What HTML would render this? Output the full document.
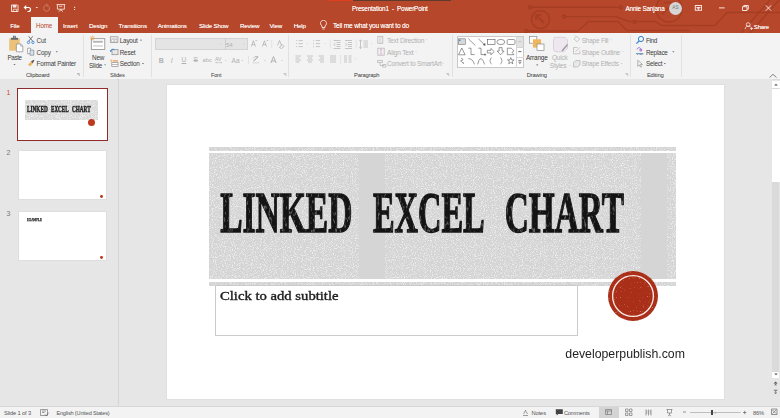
<!DOCTYPE html>
<html><head><meta charset="utf-8">
<style>
*{margin:0;padding:0;box-sizing:border-box}
html,body{width:780px;height:418px;overflow:hidden;background:#e6e6e6;font-family:"Liberation Sans",sans-serif}
.a{position:absolute;white-space:pre;line-height:1}
#title{position:absolute;left:0;top:0;width:780px;height:33px;background:#b7472a;overflow:hidden}
.w{color:#fff}
.t{font-size:6.26px;letter-spacing:-0.19px;color:#fff;text-shadow:0 0 0.4px rgba(255,255,255,0.7)}
#ribbon{position:absolute;left:0;top:33px;width:780px;height:47px;background:#f3f3f3;border-bottom:1px solid #dadada}
.r{font-size:6.37px;letter-spacing:-0.19px;color:#404040}
.d{font-size:6.37px;letter-spacing:-0.19px;color:#b1b1b1}
.gl{font-size:5.83px;letter-spacing:-0.17px;color:#444;-webkit-text-stroke:0.03px #444}
.sep{position:absolute;top:3px;width:1px;height:42px;background:#e1e1e1}
#pane{position:absolute;left:0;top:79px;width:117px;height:327px;background:#e6e6e6}
#div{position:absolute;left:118px;top:79px;width:1px;height:327px;background:#d5d5d5}
#main{position:absolute;left:119px;top:79px;width:653px;height:327px;background:#e6e6e6}
#slide{position:absolute;left:167px;top:85px;width:557px;height:314px;background:#fff;overflow:hidden;box-shadow:0 0 1px rgba(0,0,0,0.18)}
#status{position:absolute;left:0;top:406px;width:780px;height:12px;background:#f3f3f3;border-top:1px solid #d8d8d8}
.s{font-size:5.62px;letter-spacing:-0.16px;color:#555}
.tth{top:104.9px;font-family:"Liberation Serif",serif;font-weight:bold;font-size:8.75px;color:#222;-webkit-text-stroke:0.45px #222;transform-origin:0 0}
.st{font-family:"Liberation Serif",serif;font-weight:bold;font-size:57.5px}
.ttl{top:183px;font-family:"Liberation Serif",serif;font-weight:bold;font-size:55.5px;color:#222;-webkit-text-stroke:2.6px #222;transform-origin:0 0}
</style></head><body>

<div id="title">
  <svg width="780" height="33" style="position:absolute;left:0;top:0" fill="none" stroke="#a53e23" stroke-width="1.35">
    <path d="M530 7.2H621"/><circle cx="530" cy="7.2" r="1.6"/><circle cx="621" cy="7.2" r="1.6"/>
    <circle cx="540.5" cy="19.5" r="9" stroke-width="1.5"/><path d="M536 15l8 8M536 15v5M536 15h5" stroke-width="1.8"/>
    <path d="M564 16.6H616L629 21.5H655L662 25.5H715L727 12.5H780"/><circle cx="564" cy="16.6" r="1.6"/><circle cx="634.6" cy="22" r="1.6"/>
    <path d="M526 31H578L588.5 21.5H618L627 30.5H690"/><circle cx="526" cy="31" r="1.6"/>
    <circle cx="669" cy="9" r="13" stroke-width="1.5"/><path d="M664 2.5H674V12M674 2.5L662 14.5" stroke-width="1.6"/>
        <path d="M741 33L770 0M750 33L780 -1"/>
  </svg>
  <div style="position:absolute;left:329px;top:0;width:24px;height:1px;background:#e0401f"></div>
  <div style="position:absolute;left:353px;top:0;width:98px;height:1px;background:#5e3b2c"></div>
  <svg width="80" height="16" style="position:absolute;left:0;top:0" fill="none" stroke="#fff" stroke-width="1">
    <path d="M11.5 5h6l0.5 0.5v6h-6.5z" stroke="#f6e3dd"/>
    <rect x="12.8" y="5" width="3.6" height="2.6" fill="#f6e3dd" stroke="none"/>
    <path d="M13.3 11.5v-2.3h3.3v2.3" stroke="#f6e3dd" stroke-width="0.8"/>
    <path d="M26.3 5.6l-1.9 1.9 1.9 1.9" stroke-width="1.2"/>
    <path d="M24.6 7.5h3.9a2 2 0 0 1 0 4h-1" stroke-width="1.2"/>
    <path d="M35.6 7.1h2.4l-1.2 1.2z" fill="#fff" stroke="none"/>
    <path d="M48.9 6.3a3 3 0 1 1-2-1.1" stroke="#d08272" stroke-width="0.9"/>
    <path d="M46.3 3.9l1.9 1.5-1.5 1.5" stroke="#d08272" stroke-width="0.9"/>
    <path d="M56.6 4.6h8.6M57.4 4.6v4.6h7V4.6" stroke="#f6e3dd" stroke-width="0.9"/>
    <path d="M59 6.3h3.3M60.8 9.2v1.4M58.6 11.6l2.2-1.6 2.2 1.6" stroke="#f6e3dd" stroke-width="0.8"/>
    <path d="M74.6 6.8v1.1M74.6 8.9v1.1" stroke="#f6e3dd" stroke-width="1.1"/>
  </svg>
  <div class="a t" style="left:352px;top:5.5px;font-size:6.37px;letter-spacing:-0.19px">Presentation1  -  PowerPoint</div>
  <div class="a t" style="left:625.5px;top:6px;font-size:6.39px;letter-spacing:-0.19px;color:#fff">Annie Sanjana</div>
  <div style="position:absolute;left:669px;top:1.8px;width:13px;height:13px;border-radius:50%;background:#d5d5d5"></div>
  <div class="a" style="left:672.3px;top:6px;font-size:4.7px;color:#777">AS</div>
  <svg width="90" height="16" style="position:absolute;left:690px;top:0" fill="none" stroke="#f8e4de" stroke-width="1">
    <rect x="5.3" y="5.5" width="6.2" height="4.8"/><path d="M6.5 7.5h4M8.4 7.6v2.5M7.3 8.6l1.1-1.1 1.1 1.1"/>
    <path d="M29 7.9h5.6"/>
    <path d="M52.5 6.7h4.5v3.8h-4.5zM53.8 6.7v-1.2h4.5v3.7h-1.2"/>
    <path d="M75.8 5.4l5.3 5.3M81.1 5.4l-5.3 5.3"/>
  </svg>
  <svg width="10" height="10" style="position:absolute;left:744px;top:22px" fill="none" stroke="#f8e4de" stroke-width="0.85">
    <circle cx="4.2" cy="2.6" r="1.9"/><path d="M1 7.2a3.4 3.4 0 0 1 5.6-2.4M6.1 6.6h3M7.6 5.1v3"/>
  </svg>
  <div class="a t" style="left:753.8px;top:24px;color:#fff;font-size:6.05px;letter-spacing:-0.18px">Share</div>
  <div style="position:absolute;left:31px;top:17px;width:27px;height:16px;background:#f3f3f3"></div>
  <div class="a t" style="left:10.2px;top:23px">File</div>
  <div class="a" style="left:36px;top:23px;font-size:6.3px;letter-spacing:-0.15px;color:#b7472a">Home</div>
  <div class="a t" style="left:63px;top:23px">Insert</div>
  <div class="a t" style="left:89px;top:23px">Design</div>
  <div class="a t" style="left:118.6px;top:23px">Transitions</div>
  <div class="a t" style="left:157.7px;top:23px">Animations</div>
  <div class="a t" style="left:199px;top:23px">Slide Show</div>
  <div class="a t" style="left:240px;top:23px">Review</div>
  <div class="a t" style="left:269.5px;top:23px">View</div>
  <div class="a t" style="left:293.7px;top:23px">Help</div>
  <svg width="8" height="10" style="position:absolute;left:320px;top:20px" fill="none" stroke="#fbe9e4" stroke-width="0.9">
    <path d="M2 7.5v-1.6a3 3 0 1 1 3 0v1.6zM2.4 9h2.2"/>
  </svg>
  <div class="a t" style="left:333px;top:23px;font-size:6.59px;letter-spacing:-0.19px">Tell me what you want to do</div>
</div>

<div id="ribbon"></div>
<div id="rib" style="position:absolute;left:0;top:0;width:780px;height:80px">
  <!-- separators -->
  <div class="sep" style="left:83px;top:35px"></div>
  <div class="sep" style="left:151px;top:35px"></div>
  <div class="sep" style="left:288px;top:35px"></div>
  <div class="sep" style="left:452px;top:35px"></div>
  <div class="sep" style="left:629.5px;top:35px"></div>
  <div class="sep" style="left:681px;top:35px"></div>
  <!-- Clipboard -->
  <svg width="80" height="48" style="position:absolute;left:0;top:33px" viewBox="0 33 80 48">
    <rect x="9.2" y="38.3" width="10.6" height="12.4" fill="#eac27a"/>
    <rect x="11" y="37.8" width="7" height="1.9" fill="#5d6570"/>
    <rect x="13.5" y="36.2" width="2" height="1.8" fill="none" stroke="#5d6570" stroke-width="0.8"/>
    <path d="M16.4 44h4.3l2.1 2.1v5.7h-6.4z" fill="#fff" stroke="#8a8a8a" stroke-width="0.7"/>
    <path d="M20.7 44v2.1h2.1" fill="none" stroke="#8a8a8a" stroke-width="0.6"/>
    <path d="M13.4 64.0h2.2l-1.1 1.2z" fill="#666"/>
    <path d="M28.6 36.3l4.2 5M32.8 36.3l-4.2 5" stroke="#555" stroke-width="0.8"/>
    <circle cx="28.5" cy="42.4" r="1.2" fill="none" stroke="#3f88d8" stroke-width="0.9"/>
    <circle cx="32.9" cy="42.4" r="1.2" fill="none" stroke="#3f88d8" stroke-width="0.9"/>
    <path d="M27.6 48.2h3v5.5h-3z" fill="#fff" stroke="#888" stroke-width="0.7"/>
    <path d="M30 50.2h3.8v5h-3.8z" fill="#cfe3f7" stroke="#888" stroke-width="0.7"/>
    <path d="M55.7 51.2h2.2l-1.1 1.2z" fill="#666"/>
    <path d="M28 64.6l3-3 2 2-3 3z" fill="#e9b865"/>
    <path d="M31 61.6l2.6-1.8 0.8 0.8-1.8 2.6z" fill="#555"/>
    <path d="M77 73.5h2.3v2.3M77.4 73.9l1.6 1.6" fill="none" stroke="#999" stroke-width="0.6"/>
  </svg>
  <div class="a r" style="left:7.6px;top:55px;font-size:6.3px;letter-spacing:-0.42px">Paste</div>
  <div class="a r" style="left:36.6px;top:38px">Cut</div>
  <div class="a r" style="left:36.6px;top:50px">Copy</div>
  <div class="a r" style="left:36.6px;top:61px">Format Painter</div>
  <div class="a gl" style="left:25.9px;top:73px;font-size:5.85px;letter-spacing:-0.17px">Clipboard</div>

  <!-- Slides -->
  <svg width="80" height="48" style="position:absolute;left:80px;top:33px" viewBox="80 33 80 48">
    <rect x="91.3" y="38.7" width="13.5" height="10.7" fill="#fff" stroke="#8c8c8c" stroke-width="0.8"/>
    <rect x="93" y="40.8" width="9.8" height="1.9" fill="#b5b5b5"/>
    <rect x="93" y="45.3" width="9.8" height="1.3" fill="#cfcfcf"/>
    <circle cx="92.4" cy="38.2" r="1.3" fill="none" stroke="#f0a33a" stroke-width="0.7"/>
    <path d="M92.4 35.6v1M92.4 39.8v1M89.8 38.2h1M94 38.2h1M90.6 36.4l0.6 0.6M93.6 39.4l0.6 0.6M94.2 36.4l-0.6 0.6M91.2 39.4l-0.6 0.6" stroke="#f0a33a" stroke-width="0.6"/>
    <path d="M104.0 64.4h2.2l-1.1 1.2z" fill="#666"/>
    <rect x="110.3" y="36.8" width="7.6" height="5.8" fill="#fff" stroke="#8c8c8c" stroke-width="0.7"/>
    <path d="M111.3 38.3h5.6M111.5 39.5h2.3v2.3h-2.3zM114.6 39.5h2.3v2.3h-2.3z" fill="none" stroke="#9a9a9a" stroke-width="0.5"/>
    <path d="M139.9 39.8h2.2l-1.1 1.2z" fill="#666"/>
    <rect x="112" y="49.5" width="6" height="5.2" fill="#e8e8e8" stroke="#8c8c8c" stroke-width="0.7"/>
    <path d="M110.6 51.5a2.4 2.4 0 0 1 4-1.6" fill="none" stroke="#2f7fd0" stroke-width="1"/>
    <path d="M109.7 50.5l1 1.5 1.3-1.2z" fill="#2f7fd0"/>
    <rect x="110.3" y="59.6" width="2" height="2" fill="#f6b873"/>
    <rect x="113" y="60.2" width="5" height="1.4" fill="#f0a064"/>
    <rect x="111.8" y="62.6" width="6.2" height="3.8" fill="#fff" stroke="#8c8c8c" stroke-width="0.7"/>
    <path d="M111.8 64.5h6.2" stroke="#8c8c8c" stroke-width="0.6"/>
    <path d="M141.9 63.0h2.2l-1.1 1.2z" fill="#666"/>
  </svg>
  <div class="a r" style="left:92px;top:55px">New</div>
  <div class="a r" style="left:89px;top:63px">Slide</div>
  <div class="a r" style="left:119.7px;top:38px">Layout</div>
  <div class="a r" style="left:119.7px;top:50px">Reset</div>
  <div class="a r" style="left:119.7px;top:61px">Section</div>
  <div class="a gl" style="left:110px;top:73px;font-size:5.72px;letter-spacing:-0.16px">Slides</div>
  <!-- Font -->
  <div style="position:absolute;left:155.4px;top:38.2px;width:92.2px;height:11.4px;background:#e4e4e4;border:1px solid #d3d3d3"></div>
  <div style="position:absolute;left:224.5px;top:38.2px;width:1px;height:11.4px;background:#cdcdcd"></div>
  <div class="a d" style="left:226px;top:42px;font-size:6.05px;letter-spacing:-0.18px">54</div>
  <svg width="135" height="48" style="position:absolute;left:152px;top:33px" viewBox="152 33 135 48" fill="#b4b4b4">
    <path d="M219.9 43.6h1.5l-0.75 0.8zM242.9 43.6h1.5l-0.75 0.8z" fill="#c6c6c6"/>
    <path d="M225 60.1h1.5l-0.75 0.8zM241.6 60.1h1.5l-0.75 0.8zM264.1 60.1h1.5l-0.75 0.8zM281.3 60.1h1.5l-0.75 0.8z"/>
    <path d="M251.3 46.6l2.1-5.8 2.1 5.8M252.1 44.6h2.7M255.6 40.8l0.7-0.8 0.7 0.8" fill="none" stroke="#a9a9a9" stroke-width="0.7"/>
    <path d="M262.3 46.6l2.1-5.8 2.1 5.8M263.1 44.6h2.7M266.6 40.1l0.7 0.8 0.7-0.8" fill="none" stroke="#a9a9a9" stroke-width="0.7"/>
    <rect x="271.4" y="40" width="0.8" height="8.5" fill="#dedede"/>
    <path d="M277.5 45.5l2-5 2 5M279.5 47.5l2.5-3 2 2-2.5 2z" fill="none" stroke="#a9a9a9" stroke-width="0.7"/>
    <rect x="248.2" y="56" width="0.8" height="8.5" fill="#dedede"/>
    <path d="M253 58.5l2 -2h3l-4 4" fill="none" stroke="#a9a9a9" stroke-width="0.7"/>
    <path d="M253.5 61.5l4.5-4.5" stroke="#a9a9a9" stroke-width="0.9"/>
    <rect x="252.8" y="62.4" width="6.5" height="0.9" fill="#e3cce3"/>
    <path d="M270.9 63l2.6-6.5 2.6 6.5M271.9 61h3.2" fill="none" stroke="#a9a9a9" stroke-width="0.9"/>
    <path d="M215.8 62.6h6M216.5 62l-0.8 0.6 0.8 0.6M221 62l0.8 0.6-0.8 0.6" fill="none" stroke="#b0b0b0" stroke-width="0.5"/>
    <path d="M283.6 73.5h2.3v2.3M284 73.9l1.6 1.6" fill="none" stroke="#aaa" stroke-width="0.6"/>
  </svg>
  <div class="a" style="left:158.7px;top:57px;font-size:7px;font-weight:bold;color:#b0b0b0">B</div>
  <div class="a" style="left:170.8px;top:57px;font-size:7px;font-style:italic;color:#b0b0b0">I</div>
  <div class="a" style="left:181.5px;top:57px;font-size:6.6px;color:#b0b0b0;text-decoration:underline">U</div>
  <div class="a" style="left:193.5px;top:57px;font-size:6.6px;color:#b0b0b0;text-decoration:line-through">S</div>
  <div class="a" style="left:202.5px;top:58px;font-size:5.8px;color:#b0b0b0">abc</div>
  <div class="a" style="left:215px;top:56.5px;font-size:5.2px;color:#b0b0b0">AV</div>
  <div class="a" style="left:231.5px;top:57.5px;font-size:6.6px;color:#b0b0b0">Aa</div>
  <div class="a gl" style="left:211px;top:73px;font-size:5.51px;letter-spacing:-0.16px">Font</div>

  <!-- Paragraph -->
  <svg width="170" height="48" style="position:absolute;left:285px;top:33px" viewBox="285 33 170 48" fill="none" stroke="#b9b9b9" stroke-width="0.8">
    <path d="M296 40.6h1M296 43.6h1M296 46.6h1M298.5 40.6h4.3M298.5 43.6h4.3M298.5 46.6h4.3"/>
    <path d="M313.5 40.3v1M313.5 43.3v1M313.5 46.3v1M315.8 40.6h4.3M315.8 43.6h4.3M315.8 46.6h4.3"/>
    <path d="M306.7 43.4h1.5l-0.75 0.8zM324.2 43.4h1.5l-0.75 0.8zM370.8 43.4h1.5l-0.75 0.8zM354.7 58.8h1.5l-0.75 0.8z" fill="#b9b9b9" stroke="none"/>
    <path d="M330.3 39.5v9M356.2 39.5v9M340.6 55v9" stroke="#dedede"/>
    <path d="M333.5 40.5h7M336.5 42.5h4M336.5 44.5h4M336.5 46.5h4M333.5 48.5h7M335.5 42.8l-1.6 1.7 1.6 1.7"/>
    <path d="M345 40.5h7M348 42.5h4M348 44.5h4M348 46.5h4M345 48.5h7M345.2 42.8l1.6 1.7-1.6 1.7"/>
    <path d="M360.5 40v8.5M359 41.3l1.5-1.5 1.5 1.5M359 47.2l1.5 1.5 1.5-1.5M363.5 41h4.5M363.5 43h4.5M363.5 45h4.5M363.5 47h4.5"/>
    <path d="M295.5 56h5.5M295.5 58h4M295.5 60h5.5M295.5 62h4"/>
    <path d="M307 56h6M308 58h4M307 60h6M308 62h4"/>
    <path d="M318.5 56h5.5M320 58h4M318.5 60h5.5M320 62h4"/>
    <path d="M330 56h6M330 58h6M330 60h6M330 62h6"/>
    <path d="M344 56h3M344 58h3M344 60h3M344 62h3M348.5 56h3M348.5 58h3M348.5 60h3M348.5 62h3"/>
    <rect x="377.8" y="36.3" width="5" height="7"/>
    <path d="M379.3 38h2M379.3 40h2M379.3 42h2"/>
    <rect x="377.8" y="48.2" width="6.4" height="7"/>
    <path d="M381 49v5.5M380 50.2l1-1 1 1M380 53.5l1 1 1-1" stroke="#d9a5cf"/>
    <path d="M377.5 60.5h5v2h-5zM380 62.5v3h4.5M382.5 64.5h3.5v2.5h-3.5z"/>
    <path d="M425.9 39.5h1.5l-0.75 0.8zM415.3 51.4h1.5l-0.75 0.8zM442.5 63h1.5l-0.75 0.8z" fill="#b9b9b9" stroke="none"/>
    <path d="M446.5 73.5h2.3v2.3M446.9 73.9l1.6 1.6" stroke="#aaa" stroke-width="0.6"/>
  </svg>
  <div class="a d" style="left:387px;top:38px;font-size:6.59px;letter-spacing:-0.19px">Text Direction</div>
  <div class="a d" style="left:387px;top:50px;font-size:6.59px;letter-spacing:-0.19px">Align Text</div>
  <div class="a d" style="left:387px;top:61px;font-size:6.59px;letter-spacing:-0.19px">Convert to SmartArt</div>
  <div class="a gl" style="left:354px;top:73px;font-size:5.78px;letter-spacing:-0.17px">Paragraph</div>
  <!-- Drawing -->
  <div style="position:absolute;left:456.5px;top:36px;width:67px;height:31.5px;background:#fff;border:1px solid #c8c8c8"></div>
  <div style="position:absolute;left:516.2px;top:36px;width:7.3px;height:31.5px;border-left:1px solid #d4d4d4"></div>
  <div style="position:absolute;left:517px;top:37px;width:5.5px;height:9.5px;background:#e2e2e2"></div>
  <div style="position:absolute;left:516.5px;top:46.5px;width:7px;height:1px;background:#d4d4d4"></div>
  <div style="position:absolute;left:516.5px;top:56.5px;width:7px;height:1px;background:#d4d4d4"></div>
  <svg width="180" height="48" style="position:absolute;left:452px;top:33px" viewBox="452 33 180 48" fill="none" stroke="#555" stroke-width="0.6">
    <rect x="458.3" y="38.8" width="7" height="5.6" fill="#d8d8d8" stroke="#777"/>
    <rect x="459" y="39.5" width="1.5" height="1.5" fill="#4a8ad6" stroke="none"/>
    <path d="M468.3 38.7l7 6.8M478.3 38.7l6.4 6.2"/>
    <path d="M485.2 45.3l-1.9-0.4 1.5-1.5z" fill="#555"/>
    <rect x="487.4" y="39.5" width="7.6" height="5"/>
    <ellipse cx="500.8" cy="42" rx="3.9" ry="2.6"/>
    <rect x="507.2" y="39.5" width="7.8" height="5" rx="1.2"/>
    <path d="M458.5 54.8l3.3-6.8 3.3 6.8z"/>
    <path d="M468.3 48.2h2.7v6.4h3.7"/>
    <path d="M478.3 48.2h2.7v6.4h3"/>
    <circle cx="485" cy="54.6" r="0.7" fill="#555"/>
    <path d="M487.3 50.3h3.6v-1.9l3.3 3.2-3.3 3.2v-1.9h-3.6z"/>
    <path d="M499.1 47.6h3v3.5h2l-3.5 3.7-3.5-3.7h2z"/>
    <path d="M507.3 48.2h4l2.7 2.7-2 1.5 2 2.3h-6.7z"/>
    <path d="M461 58l2.2 1.6-2.6 1.4 3 2.3M463.5 62.5l-0.3 1.3"/>
    <path d="M468.2 58.6c3 0 5.5 2 6.2 5.8"/>
    <path d="M477.7 64.4c1.6-7.6 4.6-7.6 6.8 0"/>
    <path d="M491.5 57.5c-1 0-0.8 3-1.8 3.3 1 0.3 0.8 3.3 1.8 3.3"/>
    <path d="M500.5 57.5c1 0 0.8 3 1.8 3.3-1 0.3-0.8 3.3-1.8 3.3"/>
    <path d="M510.8 57.6l0.9 2.3h2.4l-1.9 1.5 0.7 2.4-2.1-1.4-2.1 1.4 0.7-2.4-1.9-1.5h2.4z"/>
    <path d="M518.4 41.6h3" stroke="#aaa"/>
    <path d="M518.4 51.6h3" stroke="#555" stroke-width="0.9"/>
    <path d="M518.4 60.6h3M518.4 62.2h3M519.1 63l0.8 0.7 0.8-0.7" stroke="#555" stroke-width="0.7"/>
    <rect x="529.6" y="36.6" width="7.2" height="6.6" fill="#fff" stroke="#8c8c8c" stroke-width="0.7"/>
    <rect x="533" y="39.3" width="8" height="8.3" fill="#f0b65c" stroke="none"/>
    <rect x="537" y="44" width="7" height="6.6" fill="#fff" stroke="#8c8c8c" stroke-width="0.7"/>
    <path d="M536.1 64.6h2.2l-1.1 1.2z" fill="#555" stroke="none"/>
    <path d="M554.5 37.3h10.5l2.5 2.5v8.5l-3.5 3.5h-7.5a3 3 0 0 1-3-3v-8.5z" fill="#eee7f0" stroke="#c9c1cc" stroke-width="0.6"/>
    <path d="M567.5 44.5l-5.5 6.5" stroke="#9a9a9a" stroke-width="1.3"/>
    <path d="M569.5 65.3h1.5l-0.75 0.8zM610.3 39.6h1.5l-0.75 0.8zM622 51.2h1.5l-0.75 0.8zM620.8 63.1h1.5l-0.75 0.8z" fill="#b9b9b9" stroke="none"/>
    <path d="M574 38.8l2.6-2.6 3 3-2.6 2.6zM575.7 36.2l-0.8-0.8" stroke="#b2b2b2" stroke-width="0.7"/>
    <path d="M573.5 47.5h4M573.5 47.5v6.3h6.3v-3M575.5 51.8l4.5-4.5" stroke="#b2b2b2" stroke-width="0.7"/>
    <path d="M573.5 62.5l2.5-2h4v4.5l-2.5 2h-4z" fill="#e8e8e8" stroke="#b2b2b2" stroke-width="0.7"/>
    <path d="M625.5 73.5h2.3v2.3M625.9 73.9l1.6 1.6" stroke="#aaa" stroke-width="0.6"/>
  </svg>
  <div class="a r" style="left:526px;top:55px;font-size:6.48px;letter-spacing:-0.19px;color:#333">Arrange</div>
  <div class="a d" style="left:551.9px;top:55px;font-size:6.48px;letter-spacing:-0.19px">Quick</div>
  <div class="a d" style="left:549.8px;top:63px;font-size:6.48px;letter-spacing:-0.19px">Styles</div>
  <div class="a d" style="left:581.7px;top:38px;font-size:6.43px;letter-spacing:-0.19px">Shape Fill</div>
  <div class="a d" style="left:581.7px;top:50px;font-size:6.43px;letter-spacing:-0.19px">Shape Outline</div>
  <div class="a d" style="left:581.7px;top:61px;font-size:6.37px;letter-spacing:-0.19px">Shape Effects</div>
  <div class="a gl" style="left:526.8px;top:73px;font-size:5.75px;letter-spacing:-0.16px">Drawing</div>
  <!-- Editing -->
  <svg width="60" height="48" style="position:absolute;left:630px;top:33px" viewBox="630 33 60 48" fill="none">
    <circle cx="641" cy="39" r="2.6" stroke="#2f7fd0" stroke-width="1"/>
    <path d="M639.2 40.9l-2.8 2.8" stroke="#2f7fd0" stroke-width="1.2"/>
    <path d="M637 49.5a2 2 0 1 1 3.5 1.5" stroke="#9a7fd0" stroke-width="1"/>
    <circle cx="640.8" cy="50" r="1.5" fill="#b07fd8"/>
    <path d="M636 53.6h7.4" stroke="#3c7fc8" stroke-width="0.8"/>
    <path d="M637 54.3h1.2M639.5 54.3h3" stroke="#888" stroke-width="0.9"/>
    <path d="M672.3 51.2h2.2l-1.1 1.2zM663.7 63.0h2.2l-1.1 1.2z" fill="#666"/>
    <path d="M637.8 60.2v6.2l1.6-1.5 1.2 2.3 1-0.5-1.2-2.2h2.2z" stroke="#888" stroke-width="0.6"/>
  </svg>
  <div class="a r" style="left:645.9px;top:38px;font-size:6.37px;letter-spacing:-0.3px">Find</div>
  <div class="a r" style="left:645.9px;top:50px;font-size:6.37px;letter-spacing:-0.22px">Replace</div>
  <div class="a r" style="left:645.9px;top:61px;font-size:6.37px;letter-spacing:-0.22px">Select</div>
  <div class="a gl" style="left:646.9px;top:73px;font-size:5.83px;letter-spacing:-0.17px">Editing</div>
  <svg width="10" height="6" style="position:absolute;left:768px;top:73px" fill="none" stroke="#555" stroke-width="0.7"><path d="M1.5 4.5l3.5-3.2 3.5 3.2"/></svg>
</div>
<div id="pane"></div>
<div id="div"></div>
<div id="main"></div>
<svg width="0" height="0" style="position:absolute">
  <defs>
    <filter id="speck" x="0" y="0" width="100%" height="100%">
      <feTurbulence type="fractalNoise" baseFrequency="0.9" numOctaves="2" seed="3" result="n"/>
      <feColorMatrix in="n" type="matrix" values="0 0 0 0 1  0 0 0 0 1  0 0 0 0 1  0 0 -4 0 2.05"/>
    </filter>
    <filter id="speck2" x="0" y="0" width="100%" height="100%">
      <feTurbulence type="fractalNoise" baseFrequency="1.1" numOctaves="2" seed="7" result="n"/>
      <feColorMatrix in="n" type="matrix" values="0 0 0 0 1  0 0 0 0 1  0 0 0 0 1  0 0 -5 0 2.6"/>
    </filter>
    <filter id="speck3" x="0" y="0" width="100%" height="100%">
      <feTurbulence type="fractalNoise" baseFrequency="0.8" numOctaves="2" seed="11" result="n"/>
      <feColorMatrix in="n" type="matrix" values="0 0 0 0 1  0 0 0 0 0.85  0 0 0 0 0.8  0 0 -6 0 2.0"/>
    </filter>
  </defs>
</svg>
<!-- thumbnails -->
<div class="a" style="left:6.4px;top:88.5px;font-size:7px;color:#cc4a2a">1</div>
<div style="position:absolute;left:16.8px;top:87.6px;width:91px;height:53.4px;border:1.6px solid #8f2b2b;background:#fff"></div>
<div style="position:absolute;left:25px;top:99.5px;width:73px;height:20.8px;background:#d9d9d9"></div>
<svg width="73" height="21" style="position:absolute;left:25px;top:99.5px"><rect width="73" height="21" filter="url(#speck2)" opacity="0.6"/></svg>
<div class="a tth" style="left:26.7px;transform:scaleX(0.6018)">LINKED</div>
<div class="a tth" style="left:50.8px;transform:scaleX(0.5821)">EXCEL</div>
<div class="a tth" style="left:71.6px;transform:scaleX(0.5944)">CHART</div>
<div style="position:absolute;left:87.9px;top:119px;width:7.4px;height:7.4px;border-radius:50%;background:#bf3a1d"></div>
<div class="a" style="left:6.4px;top:148.5px;font-size:7px;color:#777">2</div>
<div style="position:absolute;left:18px;top:150px;width:89px;height:50px;background:#fff;border:1px solid #dedede"></div>
<div style="position:absolute;left:100.3px;top:195.2px;width:2.8px;height:2.8px;border-radius:50%;background:#c0391c"></div>
<div class="a" style="left:6.4px;top:209.5px;font-size:7px;color:#777">3</div>
<div style="position:absolute;left:18px;top:210.5px;width:89px;height:50px;background:#fff;border:1px solid #dedede"></div>
<div class="a" style="left:26.8px;top:217.4px;font-family:'Liberation Serif',serif;font-weight:bold;font-size:5px;color:#222;-webkit-text-stroke:0.25px #222;transform-origin:0 0;transform:scaleX(0.6)">EXAMPLE</div>
<div style="position:absolute;left:100.3px;top:255.9px;width:2.8px;height:2.8px;border-radius:50%;background:#c0391c"></div>

<!-- slide -->
<div id="slide"></div>
<div style="position:absolute;left:209px;top:147px;width:467px;height:4px;background:#d2d2d2"></div>
<svg width="467" height="4" style="position:absolute;left:209px;top:147px"><rect width="467" height="4" filter="url(#speck2)" opacity="0.5"/></svg>
<div style="position:absolute;left:209px;top:153px;width:467px;height:125.5px;background:#d4d4d4"></div>
<svg width="467" height="126" style="position:absolute;left:209px;top:153px"><rect width="467" height="126" filter="url(#speck)" opacity="0.6"/></svg>
<div style="position:absolute;left:359px;top:153px;width:26px;height:125.5px;background:#d5d5d5"></div>
<div style="position:absolute;left:640.5px;top:153px;width:26px;height:125.5px;background:#d5d5d5"></div>
<div style="position:absolute;left:209px;top:282px;width:467px;height:3.6px;background:#d2d2d2"></div>
<svg width="467" height="4" style="position:absolute;left:209px;top:282px"><rect width="467" height="4" filter="url(#speck2)" opacity="0.5"/></svg>

<svg width="780" height="418" style="position:absolute;left:0;top:0;will-change:transform">
  <defs>
    <clipPath id="tclip">
      <text x="0" y="231.85" transform="translate(220.2 0) scale(0.5831 1)" class="st">LINKED</text>
      <text x="0" y="231.85" transform="translate(372.9 0) scale(0.5643 1)" class="st">EXCEL</text>
      <text x="0" y="231.85" transform="translate(504.8 0) scale(0.5798 1)" class="st">CHART</text>
    </clipPath>
    <filter id="speckT" x="0" y="0" width="100%" height="100%">
      <feTurbulence type="fractalNoise" baseFrequency="0.45 0.18" numOctaves="3" seed="5" result="n"/>
      <feColorMatrix in="n" type="matrix" values="0 0 0 0 0.6  0 0 0 0 0.6  0 0 0 0 0.6  0 0 -4 0 1.75"/>
    </filter>
  </defs>
  <g fill="#141414" stroke="#141414" stroke-width="1.4">
    <text x="0" y="231.85" transform="translate(220.2 0) scale(0.5831 1)" class="st">LINKED</text>
    <text x="0" y="231.85" transform="translate(372.9 0) scale(0.5643 1)" class="st">EXCEL</text>
    <text x="0" y="231.85" transform="translate(504.8 0) scale(0.5798 1)" class="st">CHART</text>
  </g>
  <g clip-path="url(#tclip)"><rect x="215" y="185" width="415" height="52" filter="url(#speckT)" opacity="0.45"/></g>
</svg>

<div style="position:absolute;left:215.4px;top:285px;width:362.6px;height:50.6px;border:1px solid #cbcbcb"></div>
<div class="a" id="sub" style="left:219.6px;top:291px;font-family:'Liberation Serif',serif;font-size:11.8px;color:#1e1e1e;-webkit-text-stroke:0.35px #1e1e1e;transform-origin:0 0;transform:scaleX(1.243)">Click to add subtitle</div>

<svg width="52" height="52" style="position:absolute;left:607px;top:269.8px">
  <defs><clipPath id="cc"><circle cx="26" cy="26" r="25"/></clipPath></defs>
  <circle cx="26" cy="26" r="25" fill="#aa2f19"/>
  <g clip-path="url(#cc)"><rect width="52" height="52" filter="url(#speck3)" opacity="0.35"/></g>
  <circle cx="26" cy="26" r="20.4" fill="none" stroke="#fbeee9" stroke-width="1.3"/>
</svg>

<div class="a" id="dev" style="left:565.3px;top:348px;font-size:12.3px;color:#1e1e1e">developerpublish.com</div>

<!-- scrollbar -->
<div style="position:absolute;left:771.7px;top:81px;width:7.3px;height:291px;background:#dadada"></div>
<div style="position:absolute;left:772px;top:81px;width:8px;height:7px;background:#fff"></div>
<div style="position:absolute;left:772.4px;top:89px;width:7.2px;height:93px;background:#fff"></div>
<div style="position:absolute;left:771.7px;top:371.7px;width:7.2px;height:6.3px;background:#fff"></div>
<svg width="8" height="30" style="position:absolute;left:772px;top:81px"><path d="M2.2 4.6l1.8-1.9 1.8 1.9z" fill="#555"/></svg>
<svg width="8" height="30" style="position:absolute;left:772px;top:371px"><path d="M2.2 2.4l1.8 1.9 1.8-1.9z" fill="#555"/></svg>
<svg width="10" height="16" style="position:absolute;left:770px;top:380px" fill="#555" stroke="none">
  <path d="M4.1 2.9l1.5-1.5 1.5 1.5z"/><rect x="3.8" y="3.3" width="3.6" height="0.6"/><path d="M4.1 5.2l1.5-1.2 1.5 1.2z"/>
  <rect x="3.8" y="9.8" width="3.6" height="0.6"/><path d="M4.1 10.6l1.5 1.2 1.5-1.2z"/><path d="M4.1 12.4l1.5 1.5 1.5-1.5z"/>
</svg>

<!-- status bar -->
<div id="status"></div>
<div class="a s" style="left:4px;top:411px;font-size:5.77px;letter-spacing:-0.16px">Slide 1 of 3</div>
<svg width="12" height="10" style="position:absolute;left:39px;top:408px" fill="none" stroke="#777" stroke-width="0.7"><path d="M1.5 1.5h7v6h-7zM3 3h4M3 4.5h2.5"/><path d="M6 6.5l1.2 1.2 2.5-3" stroke="#555"/></svg>
<div class="a s" style="left:56.4px;top:411px;font-size:5.55px;letter-spacing:-0.16px">English (United States)</div>
<svg width="10" height="10" style="position:absolute;left:521px;top:408px" fill="none" stroke="#777" stroke-width="0.7"><path d="M2 7.5h5M2.5 6l2-3.5 2 3.5M4.5 2v1"/></svg>
<div class="a s" style="left:531.6px;top:411px;font-size:5.79px;letter-spacing:-0.17px">Notes</div>
<svg width="10" height="10" style="position:absolute;left:555px;top:408px"><path d="M0.8 1.2h7v4.8h-4.5l-1.6 1.6v-1.6h-0.9z" fill="#444"/></svg>
<div class="a s" style="left:563.9px;top:411px;font-size:5.61px;letter-spacing:-0.16px">Comments</div>
<div style="position:absolute;left:599px;top:407px;width:20px;height:11px;background:#d4d4d4"></div>
<svg width="200" height="12" style="position:absolute;left:580px;top:406px" fill="none" stroke="#7a7a7a" stroke-width="0.7">
  <path d="M25.5 3.5h6v5h-6zM25.5 5h6M27.5 5v3.5"/>
  <path d="M45.5 3h2.5v2.5h-2.5zM49.5 3h2.5v2.5h-2.5zM45.5 7h2.5v2.5h-2.5zM49.5 7h2.5v2.5h-2.5z"/>
  <path d="M66 3.5v6M71 3.5v6M68.5 3.5v6M66 5h1.5M66 7h1.5M69.5 5h1.5M69.5 7h1.5"/>
  <path d="M86.5 3.5h6M87.5 3.5v3.5h4v-3.5M89.5 7v2M88 10l1.5-1 1.5 1"/>
  <path d="M103 6h3" stroke="#666"/>
  <path d="M110 6.5h50.5" stroke="#9a9a9a" stroke-width="0.6"/>
  <path d="M135.3 6v2" stroke="#9a9a9a" stroke-width="0.6"/>
  <path d="M163 6.5h3.4M164.7 4.8v3.4" stroke="#666"/>
  <path d="M191.5 3h5.5v5.5h-5.5zM192.5 4l3.5 3.5M196 4l-3.5 3.5" stroke="#666"/>
</svg>
<div style="position:absolute;left:710.8px;top:409.5px;width:2px;height:5px;background:#444"></div>
<div class="a s" style="left:753px;top:411px;font-size:5.72px;letter-spacing:-0.16px">86%</div>
</body></html>
